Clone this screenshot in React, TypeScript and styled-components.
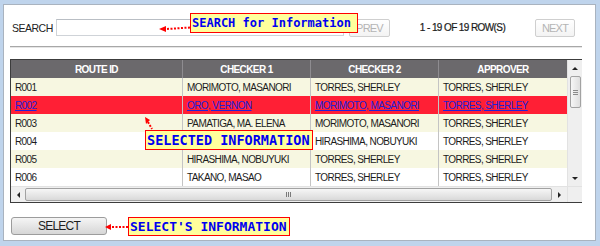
import React from "react";
import styled, { createGlobalStyle, css } from "styled-components";

const Global = createGlobalStyle`
  html, body { margin: 0; padding: 0; background: #bfd4ec; width: 600px; height: 246px; overflow: hidden; }
  * { box-sizing: border-box; }
  #root { padding: 4px 0 0 3px; }
`;

const Panel = styled.div`
  position: relative;
  width: 593px;
  height: 237px;
  background: #ffffff;
  border: 1px solid #a9b3bf;
  display: flex;
  flex-direction: column;
  font-family: "Liberation Sans", Arial, sans-serif;
`;

const TopRow = styled.div`
  display: flex;
  align-items: center;
  height: 19px;
  margin-top: 13px;
  padding: 0 20px 0 8px;
`;

const Label = styled.span`
  width: 44px;
  font-size: 10.5px;
  letter-spacing: -0.5px;
  color: #222;
`;

const SearchInput = styled.div`
  width: 288px;
  height: 17px;
  border: 1px solid #cfd3d8;
  border-top-color: #b9bec4;
  background: #fff;
`;

const PagerButton = styled.div<{ $w: number; $ml?: number }>`
  width: ${(p) => p.$w}px;
  height: 18px;
  margin-left: ${(p) => p.$ml ?? 0}px;
  border: 1px solid #cfcfcf;
  border-radius: 2px;
  background: linear-gradient(#ffffff, #f3f3f3);
  color: #b4b4b4;
  font-size: 11px;
  letter-spacing: -0.8px;
  display: flex;
  align-items: center;
  justify-content: center;
`;

const Counter = styled.span`
  flex: 1;
  text-align: center;
  font-size: 10px;
  letter-spacing: -0.6px;
  color: #1a1a1a;
  -webkit-text-stroke: 0.2px #1a1a1a;
`;

const Divider = styled.div`
  margin: 9px 13px 0 6px;
  height: 2px;
  border-top: 1px solid #a8a8a8;
  border-bottom: 1px solid #e6e6e6;
`;

const Grid = styled.div`
  margin: 11px 13px 0 6px;
  border: 1px solid #3c3c3c;
  display: grid;
  grid-template-columns: 172px 128px 128px 128px 15px;
  grid-template-rows: 18px repeat(6, 18px) 16px;
`;

const HeadCell = styled.div<{ $last?: boolean }>`
  background: #6b696c;
  color: #ffffff;
  font-weight: bold;
  font-size: 10px;
  letter-spacing: -0.6px;
  display: flex;
  align-items: center;
  justify-content: center;
  border-right: ${(p) => (p.$last ? "none" : "1px solid #8e8c90")};
`;

const Cell = styled.div<{ $odd: boolean; $sel: boolean; $last?: boolean }>`
  background: ${(p) => (p.$sel ? "#ff1f35" : p.$odd ? "#f7f7e1" : "#ffffff")};
  font-size: 10px;
  letter-spacing: -0.6px;
  color: #1c1c1c;
  display: flex;
  align-items: center;
  padding-left: 4px;
  white-space: nowrap;
  overflow: hidden;
  border-right: ${(p) => (p.$last ? "none" : "1px solid #c4c4c4")};
  ${(p) =>
    p.$sel &&
    css`
      color: #2020d8;
      text-decoration: underline;
    `}
`;

const VScroll = styled.div`
  grid-column: 5;
  grid-row: 1 / span 7;
  background: #efefef;
  border-left: 1px solid #e2e2e2;
  display: flex;
  flex-direction: column;
  align-items: center;
`;

const ArrowBox = styled.div<{ $h: number }>`
  height: ${(p) => p.$h}px;
  width: 100%;
  display: flex;
  align-items: center;
  justify-content: center;
`;

const Tri = styled.div<{ $dir: "up" | "down" | "left" | "right" }>`
  width: 0;
  height: 0;
  ${(p) =>
    p.$dir === "up"
      ? css`border-left: 3px solid transparent; border-right: 3px solid transparent; border-bottom: 3px solid #222;`
      : p.$dir === "down"
      ? css`border-left: 3px solid transparent; border-right: 3px solid transparent; border-top: 3px solid #222;`
      : p.$dir === "left"
      ? css`border-top: 3px solid transparent; border-bottom: 3px solid transparent; border-right: 3px solid #222;`
      : css`border-top: 3px solid transparent; border-bottom: 3px solid transparent; border-left: 3px solid #222;`}
`;

const VThumb = styled.div`
  width: 11px;
  height: 32px;
  border: 1px solid #a2a2a2;
  border-radius: 2px;
  background: linear-gradient(90deg, #f6f6f6, #dedede);
  display: flex;
  flex-direction: column;
  align-items: center;
  justify-content: center;
  gap: 1px;
`;

const HGripLine = styled.div`
  width: 5px;
  height: 1px;
  background: #8a8a8a;
`;

const VSpacer = styled.div`
  flex: 1;
`;

const HScroll = styled.div`
  grid-column: 1 / span 4;
  grid-row: 8;
  background: #efefef;
  border-top: 1px solid #e2e2e2;
  display: flex;
  align-items: center;
`;

const HArrow = styled.div`
  width: 14px;
  height: 100%;
  display: flex;
  align-items: center;
  justify-content: center;
`;

const HThumb = styled.div`
  width: 527px;
  height: 13px;
  border: 1px solid #a2a2a2;
  border-radius: 2px;
  background: linear-gradient(#f6f6f6, #d9d9d9);
  display: flex;
  align-items: center;
  justify-content: center;
  gap: 1px;
`;

const VGripLine = styled.div`
  width: 1px;
  height: 5px;
  background: #7a7a7a;
`;

const Corner = styled.div`
  grid-column: 5;
  grid-row: 8;
  background: #efefef;
  border-top: 1px solid #e2e2e2;
  border-left: 1px solid #e2e2e2;
`;

const Footer = styled.div`
  margin: 14px 0 0 7px;
  display: flex;
`;

const SelectButton = styled.div`
  width: 96px;
  height: 18px;
  border: 1px solid #9c9c9c;
  border-radius: 3px;
  background: linear-gradient(#f5f5f5, #d6d6d6);
  color: #1e1e1e;
  font-size: 12px;
  letter-spacing: -0.8px;
  display: flex;
  align-items: center;
  justify-content: center;
`;

const Callout = styled.div<{ $x: number; $y: number; $w: number; $h: number; $fs: number }>`
  position: absolute;
  left: ${(p) => p.$x}px;
  top: ${(p) => p.$y}px;
  width: ${(p) => p.$w}px;
  height: ${(p) => p.$h}px;
  background: #ffff9c;
  border: 1px solid #ff0000;
  color: #0000f0;
  font-family: "DejaVu Sans Mono", "Liberation Mono", monospace;
  font-weight: bold;
  font-size: ${(p) => p.$fs}px;
  display: flex;
  align-items: center;
  padding-left: 1px;
  white-space: nowrap;
`;

const ArrowSvg = styled.svg<{ $x: number; $y: number }>`
  position: absolute;
  left: ${(p) => p.$x}px;
  top: ${(p) => p.$y}px;
  overflow: visible;
`;

type Row = { id: string; c1: string; c2: string; ap: string };

const rows: Row[] = [
  { id: "R001", c1: "MORIMOTO, MASANORI", c2: "TORRES, SHERLEY", ap: "TORRES, SHERLEY" },
  { id: "R002", c1: "ORO, VERNON", c2: "MORIMOTO, MASANORI", ap: "TORRES, SHERLEY" },
  { id: "R003", c1: "PAMATIGA, MA. ELENA", c2: "MORIMOTO, MASANORI", ap: "TORRES, SHERLEY" },
  { id: "R004", c1: "", c2: "HIRASHIMA, NOBUYUKI", ap: "TORRES, SHERLEY" },
  { id: "R005", c1: "HIRASHIMA, NOBUYUKI", c2: "TORRES, SHERLEY", ap: "TORRES, SHERLEY" },
  { id: "R006", c1: "TAKANO, MASAO", c2: "TORRES, SHERLEY", ap: "TORRES, SHERLEY" },
];

export default function App() {
  return (
    <>
      <Global />
      <Panel>
        <TopRow>
          <Label>SEARCH</Label>
          <SearchInput />
          <PagerButton $w={41} $ml={5}>PREV</PagerButton>
          <Counter>1 - 19 OF 19 ROW(S)</Counter>
          <PagerButton $w={40}>NEXT</PagerButton>
        </TopRow>
        <Divider />
        <Grid>
          <HeadCell>ROUTE ID</HeadCell>
          <HeadCell>CHECKER 1</HeadCell>
          <HeadCell>CHECKER 2</HeadCell>
          <HeadCell $last>APPROVER</HeadCell>
          <VScroll>
            <ArrowBox $h={16}>
              <Tri $dir="up" />
            </ArrowBox>
            <VThumb>
              <HGripLine />
              <HGripLine />
              <HGripLine />
            </VThumb>
            <VSpacer />
            <ArrowBox $h={16}>
              <Tri $dir="down" />
            </ArrowBox>
          </VScroll>
          {rows.map((r, i) => {
            const odd = i % 2 === 0;
            const sel = i === 1;
            return (
              <React.Fragment key={r.id}>
                <Cell $odd={odd} $sel={sel}>{r.id}</Cell>
                <Cell $odd={odd} $sel={sel}>{r.c1}</Cell>
                <Cell $odd={odd} $sel={sel}>{r.c2}</Cell>
                <Cell $odd={odd} $sel={sel} $last>{r.ap}</Cell>
              </React.Fragment>
            );
          })}
          <HScroll>
            <HArrow>
              <Tri $dir="left" />
            </HArrow>
            <HThumb>
              <VGripLine />
              <VGripLine />
              <VGripLine />
            </HThumb>
            <HArrow>
              <Tri $dir="right" />
            </HArrow>
          </HScroll>
          <Corner />
        </Grid>
        <Footer>
          <SelectButton>SELECT</SelectButton>
        </Footer>

        <ArrowSvg $x={152} $y={17} width={36} height={10}>
          <polygon points="3,7 10,4 10,10" fill="#ff0000" />
          <line x1="11" y1="7" x2="34" y2="5.5" stroke="#ff0000" strokeWidth="2" strokeDasharray="2 1.5" />
        </ArrowSvg>
        <Callout $x={186} $y={8} $w={168} $h={20} $fs={12}>SEARCH for Information</Callout>

        <ArrowSvg $x={139} $y={110} width={14} height={18}>
          <polygon points="2,2 7,5 3,9" fill="#ff0000" />
          <line x1="5" y1="7" x2="9" y2="14" stroke="#ff0000" strokeWidth="2" strokeDasharray="2 1.5" />
        </ArrowSvg>
        <Callout $x={141} $y={125} $w={168} $h={20} $fs={13.5}>SELECTED INFORMATION</Callout>

        <ArrowSvg $x={99} $y={216} width={26} height={10}>
          <polygon points="2,6 8,3 8,9" fill="#ff0000" />
          <line x1="9" y1="6" x2="25" y2="6" stroke="#ff0000" strokeWidth="2" strokeDasharray="2 1.5" />
        </ArrowSvg>
        <Callout $x={124} $y={212} $w={162} $h={19} $fs={13}>SELECT'S INFORMATION</Callout>
      </Panel>
    </>
  );
}
